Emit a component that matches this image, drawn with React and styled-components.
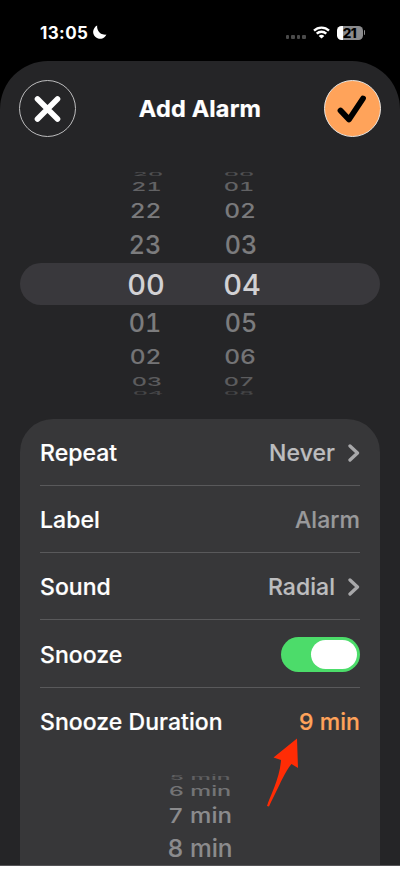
import React from 'react'
import styled, { createGlobalStyle } from 'styled-components'

const GlobalStyle = createGlobalStyle`
  * {
    box-sizing: border-box;
  }
  body {
    margin: 0;
    background: #fff;
    font-family: Inter, 'Liberation Sans', sans-serif;
    font-weight: 500;
    color: #fff;
  }
`

const Screen = styled.main`
  position: relative;
  display: flex;
  flex-direction: column;
  width: 400px;
  height: 866px;
  margin-bottom: 16px;
  overflow: hidden;
  background: #000;
  border-bottom: 1px solid #555457;
`

const StatusBar = styled.header`
  display: flex;
  flex: none;
  align-items: center;
  height: 61px;
  padding: 4px 35px 0 40px;
`

const Time = styled.span`
  width: 52px;
  font-size: 17px;
  font-weight: 700;
  letter-spacing: 0.4px;
`

const StatusIcons = styled.div`
  display: flex;
  align-items: center;
  margin-left: auto;
`

const Signal = styled.div`
  display: flex;
  gap: 2px;
  margin: 9px 7px 0 0;

  i {
    width: 3.4px;
    height: 3.4px;
    border-radius: 1px;
    background: #4a4a4a;
  }
`

const Battery = styled.div`
  width: 26px;
  height: 14px;
  margin-left: 7px;
  border-radius: 4.5px;
  background: linear-gradient(90deg, #fff 23%, #8b8b8d 23%);
  color: #000;
  font-size: 13.5px;
  font-weight: 800;
  letter-spacing: -0.6px;
  line-height: 14px;
  text-align: center;
`

const BatteryCap = styled.div`
  width: 1.5px;
  height: 5px;
  margin-left: 1px;
  border-radius: 0 2px 2px 0;
  background: #8b8b8d;
`

const Sheet = styled.section`
  display: flex;
  flex: 1;
  flex-direction: column;
  border-radius: 48px 48px 0 0;
  background: #252527;
`

const TitleBar = styled.div`
  display: flex;
  flex: none;
  align-items: center;
  justify-content: space-between;
  height: 95px;
  padding: 0 19px;
`

const Title = styled.h1`
  margin: 0;
  font-size: 23.5px;
  font-weight: 700;
  letter-spacing: 0.15px;
  -webkit-text-stroke: 0.2px;
`

const RoundButton = styled.button`
  display: flex;
  align-items: center;
  justify-content: center;
  width: 57px;
  height: 57px;
  padding: 0;
  border: 1px solid ${props => (props.$accent ? '#e8e4e0' : '#bdbdbe')};
  border-radius: 50%;
  background: ${props => (props.$accent ? '#ffa35a' : '#252527')};
`

const TimePicker = styled.div`
  display: grid;
  flex: none;
  grid-template-columns: 36px 36px;
  column-gap: 60px;
  height: 223px;
  margin: 16px 0 24px;
  padding-left: 128px;
`

const SelectedBand = styled.div`
  position: absolute;
  top: 263px;
  left: 20px;
  width: 360px;
  height: 42px;
  border-radius: 21px;
  background: #39383c;
`

const Wheel = styled.div`
  position: relative;
  display: flex;
  flex-direction: column;
`

const WheelItem = styled.div`
  display: flex;
  flex: none;
  align-items: center;
  justify-content: center;
  height: ${props => props.$height}px;
  color: ${props => props.$color};
  font-size: ${props => props.$size}px;
  font-variant-numeric: tabular-nums;
  line-height: 1;
  white-space: nowrap;
  -webkit-text-stroke: 0.1px;

  span {
    transform: translateX(${props => props.$shift || 0}px) scaleY(${props => props.$squash || 1});
  }
`

const Card = styled.div`
  display: flex;
  flex: 1;
  flex-direction: column;
  margin: 0 20px;
  padding: 0 20px;
  border-radius: 33px 33px 0 0;
  background: #373739;
`

const Row = styled.div`
  display: flex;
  flex: none;
  align-items: center;
  justify-content: space-between;
  height: ${props => props.$height}px;
  padding-top: ${props => props.$drop || 0}px;
  border-bottom: 1px solid ${props => (props.$last ? 'transparent' : '#59595b')};
  font-size: 23px;
  letter-spacing: 0.05px;
  -webkit-text-stroke: 0.2px;
`

const Value = styled.span`
  display: flex;
  align-items: center;
  gap: 13px;
  color: ${props => props.$color};
`

const Switch = styled.div`
  display: flex;
  justify-content: flex-end;
  width: 79px;
  height: 35px;
  margin-bottom: 2px;
  padding: 3px;
  border-radius: 18px;
  background: #4cdc6a;
`

const Knob = styled.div`
  width: 46px;
  height: 29px;
  border-radius: 15px;
  background: #fff;
`

const DurationWheel = styled(Wheel)`
  padding-top: 20px;
`

const Pointer = styled.svg`
  position: absolute;
  top: 736px;
  left: 264px;
`

const slots = [
  { $height: 5, $size: 23.5, $squash: 0.2, $color: '#505052' },
  { $height: 19, $size: 23.5, $squash: 0.52, $color: '#626264' },
  { $height: 30, $size: 24.5, $squash: 0.8, $color: '#7a7a7c' },
  { $height: 38, $size: 25, $squash: 1, $color: '#7c7c7e' },
  { $height: 40, $size: 29, $squash: 1, $color: '#d2d1d4' },
  { $height: 39, $size: 25, $squash: 1, $color: '#7c7c7e' },
  { $height: 29, $size: 24.5, $squash: 0.8, $color: '#747476' },
  { $height: 19, $size: 23.5, $squash: 0.52, $color: '#5c5c5e' },
  { $height: 5, $size: 23.5, $squash: 0.2, $color: '#464648' },
]

const hours = ['20', '21', '22', '23', '00', '01', '02', '03', '04']
const minutes = ['00', '01', '02', '03', '04', '05', '06', '07', '08']
const hourShift = [2, 0.5, -0.5, -1, 0, -1, -0.5, 1, 2]
const minuteShift = [-3, -3, -2, -1, 0, -1, -2, -3, -3]

const durations = [
  { label: '5 min', $height: 7, $size: 23, $squash: 0.27, $color: '#606062' },
  { label: '6 min', $height: 20, $size: 23.5, $squash: 0.58, $color: '#747476' },
  { label: '7 min', $height: 30, $size: 24, $squash: 0.85, $color: '#8b8b8d' },
  { label: '8 min', $height: 35, $size: 24.5, $squash: 1, $color: '#8b8b8d' },
]

const Chevron = () => (
  <svg width="12" height="18" viewBox="0 0 12 18" fill="none">
    <path d="M2 2 9.5 9 2 16" stroke="#a8a8aa" strokeWidth="3.3" strokeLinecap="round" strokeLinejoin="round" />
  </svg>
)

const NumberWheel = ({ values, shift }) => (
  <Wheel>
    {values.map((value, i) => (
      <WheelItem key={value} {...slots[i]} $shift={shift[i]}>
        <span>{value}</span>
      </WheelItem>
    ))}
  </Wheel>
)

const App = () => (
  <>
    <GlobalStyle />
    <Screen>
      <StatusBar>
        <Time>13:05</Time>
        <svg width="15" height="15" viewBox="0 0 15 15">
          <path d="M5.2.6A6.9 6.9 0 1 0 14.4 9.6 8 8 0 0 1 5.2.6Z" fill="#fff" />
        </svg>
        <StatusIcons>
          <Signal>
            <i />
            <i />
            <i />
            <i />
          </Signal>
          <svg width="17" height="13" viewBox="0 0 17 13" fill="none" stroke="#fff" strokeWidth="2.3">
            <path d="M1 4.6a10.7 10.7 0 0 1 15 0" />
            <path d="M3.7 7.7a6.9 6.9 0 0 1 9.6 0" />
            <path d="M8.5 12.6 5.7 9.9a3.9 3.9 0 0 1 5.6 0Z" fill="#fff" stroke="none" />
          </svg>
          <Battery>21</Battery>
          <BatteryCap />
        </StatusIcons>
      </StatusBar>
      <Sheet>
        <TitleBar>
          <RoundButton aria-label="Cancel">
            <svg width="28" height="28" viewBox="0 0 28 28">
              <path d="M3.5 4 23.5 24M23.5 4 3.5 24" stroke="#fff" strokeWidth="5.6" strokeLinecap="round" />
            </svg>
          </RoundButton>
          <Title>Add Alarm</Title>
          <RoundButton $accent aria-label="Save">
            <svg width="32" height="32" viewBox="0 0 32 32" fill="none">
              <path d="M4.5 17.5 13 26.5 27 5.5" stroke="#000" strokeWidth="5.8" strokeLinecap="round" strokeLinejoin="round" />
            </svg>
          </RoundButton>
        </TitleBar>
        <SelectedBand />
        <TimePicker>
          <NumberWheel values={hours} shift={hourShift} />
          <NumberWheel values={minutes} shift={minuteShift} />
        </TimePicker>
        <Card>
          <Row $height={67} $drop={2}>
            Repeat
            <Value $color="#bdbdbf">
              Never
              <Chevron />
            </Value>
          </Row>
          <Row $height={67} $drop={1}>
            Label
            <Value $color="#99999b">Alarm</Value>
          </Row>
          <Row $height={67} $drop={1}>
            Sound
            <Value $color="#bdbdbf">
              Radial
              <Chevron />
            </Value>
          </Row>
          <Row $height={68} $drop={3}>
            Snooze
            <Switch>
              <Knob />
            </Switch>
          </Row>
          <Row $height={66} $drop={3} $last>
            Snooze Duration
            <Value $color="#ffa35a">9 min</Value>
          </Row>
          <DurationWheel>
            {durations.map(({ label, ...slot }) => (
              <WheelItem key={label} {...slot}>
                <span>{label}</span>
              </WheelItem>
            ))}
          </DurationWheel>
        </Card>
      </Sheet>
      <Pointer width="36" height="74" viewBox="0 0 36 74">
        <path d="M33 2.5 34 32 27.5 28C21 36 17 46 5 70.5L3 70C6 60 16 42 17 24L9.5 21.5Z" fill="#ff2c05" />
      </Pointer>
    </Screen>
  </>
)

export default App
